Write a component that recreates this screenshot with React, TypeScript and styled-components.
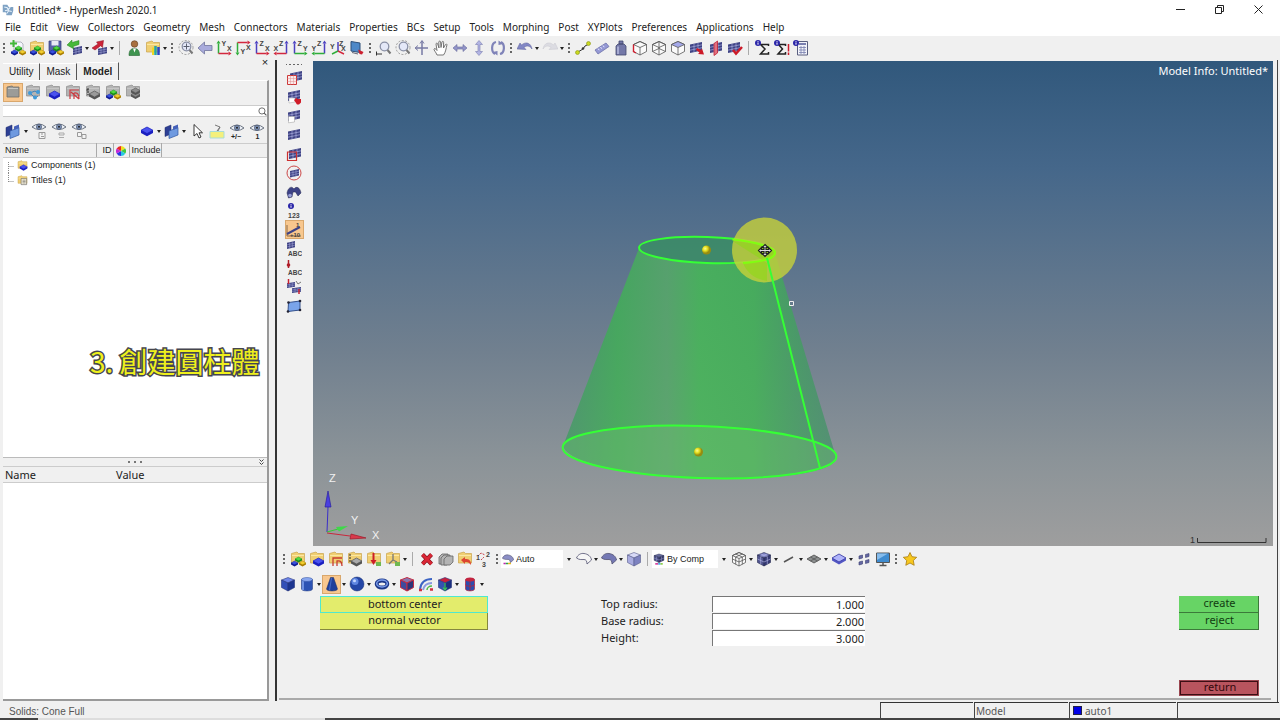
import React from 'react';
import styled, { createGlobalStyle, css } from 'styled-components';

const GlobalStyle = createGlobalStyle`
  * { box-sizing: border-box; }
  body { margin: 0; background: #f0f0f0; }
  button, input, select { font: inherit; color: inherit; margin: 0; padding: 0; border: 0; border-radius: 0; background: none; }
`;

const ui = `"Noto Sans", "Noto Sans CJK TC", sans-serif`;
const classic = `"Liberation Sans", Arial, sans-serif`;

/* ---------- window frame ---------- */

const Window = styled.div`
  position: relative;
  display: flex;
  flex-direction: column;
  min-height: 100vh;
  background: #f0f0f0;
  color: #222;
  font: 11px/16px ${ui};
`;

const TitleBar = styled.header`
  display: flex;
  align-items: center;
  height: 19px;
  padding-left: 2px;
  gap: 4px;
  background: #fff;
`;

const WindowTitle = styled.h1`
  flex: 1;
  margin: 0;
  font: 10px/18px ${ui};
`;

const WindowButton = styled.button`
  display: grid;
  place-items: center;
  width: 39px;
  height: 18px;
`;

const WindowButtons = styled.div`
  display: flex;
  padding-right: 2px;
`;

const MenuBar = styled.nav`
  display: flex;
  align-items: flex-start;
  gap: 9px;
  height: 17px;
  padding-left: 5px;
  background: #fff;
`;

const MenuItem = styled.button`
  font: 10px/16px ${ui};
  white-space: nowrap;
`;

const Body = styled.div`
  display: flex;
  flex: 1;
`;

/* ---------- tool bars ---------- */

const ToolBar = styled.div<{ $height: number; $indent?: number }>`
  display: flex;
  align-items: center;
  height: ${p => p.$height}px;
  padding-left: ${p => p.$indent ?? 0}px;
`;

const ToolButton = styled.button<{ $active?: boolean; $wide?: boolean }>`
  display: grid;
  place-items: center;
  flex: none;
  width: ${p => (p.$wide ? 20 : 19)}px;
  height: 19px;
  ${p => p.$active && css`background: #f8c78e; box-shadow: inset 0 0 0 1px #d9a76c;`}
`;

const Drop = styled.button`
  flex: none;
  width: 6px;
  height: 16px;
  display: grid;
  place-items: center;
  &::after {
    content: '';
    border: 2px solid transparent;
    border-top: 3px solid #222;
    border-bottom: 0;
  }
`;

const Grip = styled.span`
  flex: none;
  width: 8px;
  height: 14px;
  background: radial-gradient(circle, #666 1px, transparent 1px) center / 8px 4px repeat-y;
`;

const Rule = styled.span`
  flex: none;
  width: 1px;
  height: 14px;
  margin: 0 4px;
  background: #aaa;
`;

const Spacer = styled.span`
  flex: 1;
`;

/* ---------- model browser ---------- */

const Dock = styled.aside`
  display: flex;
  flex-direction: column;
  width: 277px;
  flex: none;
  padding: 0 6px 0 3px;
  border-right: 2px solid #333;
  margin-bottom: 1px;
`;

const TabRow = styled.div`
  display: flex;
  align-items: flex-end;
  height: 20px;
`;

const Tab = styled.button<{ $active?: boolean }>`
  height: ${p => (p.$active ? 18 : 17)}px;
  padding: 0 6px;
  border-right: 1px solid #555;
  border-top: 1px solid #fff;
  font: ${p => (p.$active ? 'bold' : 'normal')} 10px/16px ${classic};
`;

const CloseTab = styled.button`
  align-self: flex-start;
  margin-left: auto;
  width: 8px;
  height: 5px;
  font: 11px/3px ${classic};
`;

const Browser = styled.div`
  display: flex;
  flex-direction: column;
  flex: 1;
  border-top: 1px solid #fff;
  border-right: 2px solid #999;
  border-bottom: 2px solid #999;
`;

const SearchBox = styled.label`
  display: flex;
  align-items: center;
  height: 12px;
  margin: 2px 0;
  background: #fff;
  border-top: 1px solid #ccc;
  border-bottom: 1px solid #ccc;
  input { flex: 1; min-width: 0; height: 10px; outline: 0; }
`;

const TreePane = styled.div`
  height: 314px;
  background: #fff;
`;

const PropertyPane = styled.div`
  flex: 1;
  background: #fff;
`;

const DataTable = styled.table<{ $font: string; $size: number; $head: number }>`
  width: 100%;
  table-layout: fixed;
  border-collapse: collapse;
  font: ${p => p.$size}px/13px ${p => p.$font};
  th {
    height: ${p => p.$head}px;
    padding: 0 0 0 2px;
    background: #f0f0f0;
    border-bottom: 1px solid #ccc;
    border-top: 1px solid #ccc;
    text-align: left;
    font-weight: normal;
    white-space: nowrap;
  }
  td { padding: 0; height: 15px; }
`;

const Column = styled.th<{ $line?: boolean; $end?: boolean }>`
  ${p => p.$line && css`border-right: 1px solid #aaa;`}
  && { ${p => p.$end && css`text-align: right; padding-right: 1px;`} }
`;

const TreeCell = styled.div`
  display: flex;
  align-items: center;
  gap: 3px;
  height: 15px;
  white-space: nowrap;
  padding-left: 5px;
  svg { flex: none; }
`;

const Splitter = styled.div`
  display: flex;
  align-items: center;
  justify-content: center;
  height: 9px;
  border-top: 1px solid #bbb;
  background: radial-gradient(circle, #777 1px, transparent 1px) center / 6px 6px no-repeat,
    radial-gradient(circle, #777 1px, transparent 1px) calc(50% - 6px) center / 6px 6px no-repeat,
    radial-gradient(circle, #777 1px, transparent 1px) calc(50% + 6px) center / 6px 6px no-repeat;
  svg { margin-left: auto; margin-right: 3px; }
`;

/* ---------- work area ---------- */

const Work = styled.main`
  display: flex;
  flex-direction: column;
  flex: 1;
  min-width: 0;
  padding: 1px 2px 0 1px;
  margin-right: 2px;
  border-right: 1px solid #444;
`;

const Stage = styled.div`
  display: flex;
  padding: 0 2px 0 6px;
`;

const SideBar = styled.div`
  display: flex;
  flex-direction: column;
  width: 29px;
  flex: none;
  align-items: center;
  padding-right: 9px;
`;

const SideGrip = styled.span`
  width: 16px;
  height: 7px;
  background: radial-gradient(circle, #666 1px, transparent 1px) center / 4px 7px repeat-x;
`;

const Viewport = styled.section`
  position: relative;
  flex: 1;
  min-width: 0;
  background: linear-gradient(#31587c, #45678a 22%, #71808f 60%, #8b9398 82%, #9e9e9e);
`;

const Scene = styled.svg`
  display: block;
  width: 100%;
`;

const ModelInfo = styled.p`
  position: absolute;
  top: 1px;
  right: 5px;
  margin: 0;
  color: #fff;
  font: 11px/18px ${ui};
`;

const Picker = styled.label<{ $width: number }>`
  display: flex;
  align-items: center;
  flex: none;
  height: 18px;
  width: ${p => p.$width}px;
  padding-left: 1px;
  gap: 2px;
  background: #fff;
  select {
    flex: 1;
    min-width: 0;
    appearance: none;
    outline: 0;
    font: 9px/16px ${classic};
  }
`;

const PickerDrop = styled(Drop)`
  width: 11px;
`;

const Panel = styled.form`
  display: flex;
  flex: 1;
  margin: 0 4px 2px 1px;
  padding: 0 12px 2px 41px;
  border-bottom: 2px solid #aaa;
  font: 11px/15px ${ui};
`;

const PanelColumn = styled.div<{ $width: number; $after?: number }>`
  display: flex;
  flex-direction: column;
  width: ${p => p.$width}px;
  margin-right: ${p => p.$after ?? 0}px;
`;

const tones = {
  pick: ['#e3ec6c', '#85883f'],
  go: ['#67d465', '#3c7a3a'],
  back: ['#b9545e', '#6b2c33'],
};

const PanelButton = styled.button<{ $tone: keyof typeof tones; $focus?: boolean }>`
  width: 100%;
  height: 17px;
  padding: 0 0 2px 2px;
  line-height: 14px;
  text-align: center;
  background: ${p => tones[p.$tone][0]};
  border-right: 1px solid ${p => tones[p.$tone][1]};
  border-bottom: 1px solid ${p => tones[p.$tone][1]};
  ${p => p.$focus && css`border: 1px solid #4fe8d0;`}
  ${p => p.$tone === 'back' && css`
    height: 16px;
    margin-top: auto;
    line-height: 10px;
    border: 2px solid #3c0e14;
    outline: 1px solid #9a4650;
    outline-offset: -1px;
    color: #33080c;
  `}
  ${p => p.$tone === 'go' && css`color: #123c12;`}
`;

const Field = styled.label`
  display: flex;
  height: 17px;
  span { width: 111px; }
  input {
    width: 153px;
    height: 16px;
    margin-bottom: 1px;
    padding: 0 1px 1px 0;
    text-align: right;
    background: #fff;
    border-top: 1px solid #777;
    border-left: 1px solid #777;
    outline: 0;
  }
`;

const StatusBar = styled.footer`
  display: flex;
  align-items: stretch;
  height: 18px;
  border-bottom: 2px solid;
  border-image: linear-gradient(90deg, #444 40px, #ddd 40px, #ddd 326px, #444 326px) 2;
  font: 10px/20px ${classic};
  color: #555;
`;

const StatusText = styled.p`
  flex: 1;
  margin: 0;
  padding-left: 9px;
`;

const StatusCell = styled.div<{ $width: number }>`
  display: flex;
  align-items: center;
  gap: 3px;
  width: ${p => p.$width}px;
  border-left: 1px solid #444;
  border-top: 1px solid #333;
  margin-right: 1px;
  padding-left: 1px;
  font: 10px/16px ${ui};
`;

const Swatch = styled.span`
  width: 9px;
  height: 9px;
  margin-left: 2px;
  background: #0000e6;
  border: 1px solid #224;
`;

const Caption = styled.p`
  position: absolute;
  left: 90px;
  top: 341px;
  margin: 0;
  color: #eef01c;
  font: 28px/40px "Noto Sans CJK TC", sans-serif;
  -webkit-text-stroke: 3px #45454f;
  paint-order: stroke fill;
  white-space: nowrap;
`;

/* ---------- icon parts ---------- */

const Svg = ({ children, size = 16 }: { children: React.ReactNode; size?: number }) => (
  <svg width={size} height={size} viewBox="0 0 16 16" fill="none" aria-hidden="true">{children}</svg>
);

const FolderShape = ({ gray }: { gray?: boolean }) => (
  <g>
    <path d="M1.500 2.500 7 1l1.500 1.500H14.500V12H1.500z" fill={gray ? '#b4b4b4' : '#f0cf72'} stroke={gray ? '#8c8c8c' : '#c9a24a'} strokeWidth=".7" />
    <path d="M2 4.500h12" stroke={gray ? '#cfcfcf' : '#fff0b8'} strokeWidth=".7" />
  </g>
);

const Slab = ({ x = 4, y = 7, c = '#1a1fc0', t = '#4a52ee', w = 11 }: { x?: number; y?: number; c?: string; t?: string; w?: number }) => (
  <g transform={`translate(${x} ${y}) scale(${w / 11})`}>
    <path d="M0 3v2.500l5.500 3 5.500-3V3z" fill={c} />
    <path d="M0 3 5.500 0 11 3 5.500 6z" fill={t} stroke={c} strokeWidth=".7" />
  </g>
);

const Trio = () => (
  <g>
    <Slab x={5} y={6} w={7} c="#188a18" t="#50dc40" />
    <Slab x={1} y={10} w={7} c="#101a90" t="#3850e0" />
    <Slab x={9} y={10} w={7} c="#a87c00" t="#f2cf30" />
  </g>
);

const Patch = ({ x = 2, y = 2, w = 12, h = 11, c = '#3f4384' }: { x?: number; y?: number; w?: number; h?: number; c?: string }) => (
  <g transform={`translate(${x} ${y}) scale(${w / 12} ${h / 11})`}>
    <path d="M0 2.500 12 0v8.500L0 11z" fill={c} />
    <path d="M0 5.300 12 2.800M0 8.200 12 5.700M4 1.700v8.500M8 .8v8.500" stroke="#a9ade0" strokeWidth=".7" />
  </g>
);

const CubeShape = ({ t = '#6f86e8', l = '#3350b8', r = '#1c3590', s = '#26367c', sw = 0.6 }: { t?: string; l?: string; r?: string; s?: string; sw?: number }) => (
  <g stroke={s} strokeWidth={sw} strokeLinejoin="round">
    <path d="M1.500 4 8 1.500 14.500 4 8 7z" fill={t} />
    <path d="M1.500 4 8 7v8L1.500 11.500z" fill={l} />
    <path d="M14.500 4 8 7v8l6.500-3.500z" fill={r} />
  </g>
);

const WireCube = ({ inner, top, grid }: { inner?: boolean; top?: boolean; grid?: boolean }) => (
  <g stroke="#555" strokeWidth=".8" strokeLinejoin="round">
    <path d="M1.500 4.500 8 1.500l6.500 3V11.500L8 15l-6.500-3.500z" fill="#fafafa" />
    <path d="M1.500 4.500 8 7.500l6.500-3L8 1.500z" fill={top ? '#a5a9ea' : 'none'} />
    <path d="M8 7.500V15" />
    {inner && <path d="M8 1.500v7M1.500 11.500 8 8.500l6.500 3" />}
    {grid && <path d="M4.700 6v7.300M11.300 6v7.300M1.500 8 8 11l6.500-3M4.700 3l6.600 3M11.300 3 4.700 6" />}
  </g>
);

const Letter = ({ x, y, children, c = '#444', size = 7 }: { x: number; y: number; children: string; c?: string; size?: number }) => (
  <text x={x} y={y} fontSize={size} fontFamily="Liberation Sans, sans-serif" fontWeight="bold" fill={c}>{children}</text>
);

const R = '#d3283f', G = '#2fae3a', B = '#4a3fc0';

const AxisIcon = ({ v, h, right, down, a, b }: { v: string; h: string; right?: boolean; down?: boolean; a: string; b: string }) => {
  const x = right ? 13.5 : 2.5;
  const y = down ? 2.5 : 13.5;
  const tip = down ? 15.5 : 0.5;
  const tipY = down ? 12.5 : 3.5;
  const end = right ? 0.5 : 15.5;
  const endX = right ? 3.5 : 12.5;
  return (
    <Svg>
      <path d={`M${x} ${y}V${tipY}`} stroke={v} strokeWidth="1.500" />
      <path d={`M${x - 2} ${tipY}L${x} ${tip}L${x + 2} ${tipY}z`} fill={v} />
      <path d={`M${x} ${y}H${endX}`} stroke={h} strokeWidth="1.500" />
      <path d={`M${endX} ${y - 2}L${end} ${y}L${endX} ${y + 2}z`} fill={h} />
      <Letter x={right ? 6 : 5.5} y={down ? 14 : 6}>{a}</Letter>
      <Letter x={right ? 0.5 : 11} y={down ? 9.5 : 10.5}>{b}</Letter>
    </Svg>
  );
};

const EyeShape = ({ y = 0 }: { y?: number }) => (
  <g transform={`translate(0 ${y})`}>
    <path d="M1 5Q8-1 15 5 8 10 1 5z" fill="#eef2f8" stroke="#6a7280" />
    <circle cx="8" cy="4.800" r="2.600" fill="#7f93b8" stroke="#46546e" strokeWidth=".7" />
    <circle cx="8" cy="4.800" r="1" fill="#222" />
  </g>
);

const Info = ({ x = 3, y = 3 }: { x?: number; y?: number }) => (
  <g>
    <circle cx={x} cy={y} r="3" fill="#2a25a8" />
    <path d={`M${x} ${y - 0.5}v2.200M${x} ${y - 1.9}v.8`} stroke="#fff" />
  </g>
);

const Glass = ({ dashed }: { dashed?: boolean }) => (
  <g>
    <circle cx="8.500" cy="6.500" r="4.300" fill="#e4e8f8" stroke="#8a90a6" strokeWidth="1.300" />
    <path d="m11.500 10 3 3.500" stroke="#777" strokeWidth="2" />
    {dashed && <circle cx="8" cy="7.500" r="7" stroke="#888" strokeWidth=".8" strokeDasharray="2 1.500" />}
  </g>
);

const Surface = ({ c = '#8c8fc6' }: { c?: string }) => (
  <path d="M.5 7C2 3.500 5 2 8 2.500c4 .5 7 3 7.500 6.500L11 13c0-3-1-4.500-3-4.500-3 0-4.500.5-7.500-1.500z" fill={c} stroke="#505070" strokeWidth=".8" />
);

const icons: Record<string, React.ReactNode> = {
  new: <Svg><path d="M4 2h7l2 2v7H4z" fill="#f4f7fb" stroke="#99a" strokeWidth=".7" /><path d="M3.500 0v7M0 3.500h7" stroke="#43b83a" strokeWidth="2" /><Trio /></Svg>,
  open: <Svg><FolderShape /><Trio /></Svg>,
  save: <Svg><path d="M1 1h12v11H2l-1-1z" fill="#5762a8" stroke="#343c78" strokeWidth=".7" /><path d="M3.500 1h7v4.500h-7z" fill="#e8ebf5" /><Trio /></Svg>,
  import: <Svg><Patch x={6} y={6} w={9} h={9} /><path d="m0 5 5-5v2.500l7-2v4L6 6.500l1 2.500z" fill="#47b83a" stroke="#26801c" strokeWidth=".5" /></Svg>,
  export: <Svg><Patch x={6} y={7} w={9} h={8} /><path d="m0 8 6-4-1.500-2 7-1.500-1 7-1.800-1.800L3 10z" fill="#cc2438" stroke="#8a0f20" strokeWidth=".5" /></Svg>,
  user: <Svg><circle cx="8.500" cy="4" r="3.300" fill="#a87040" stroke="#5f3a1c" strokeWidth=".6" /><path d="M3 15.500c0-5 2-7 5-7s5.500 1 5.500 7z" fill="#3f9450" stroke="#24642f" strokeWidth=".6" /><path d="m7 8.500 1.500 4L10 8.500" fill="#fff" /></Svg>,
  folderBars: <Svg><FolderShape /><path d="M8 7.500V15" stroke="#f0d820" strokeWidth="2" /><path d="M10.500 6v9" stroke="#26a6a0" strokeWidth="2.500" /><path d="M13.500 7v8" stroke="#2846c8" strokeWidth="2.500" /></Svg>,
  fit: <Svg><Glass dashed /><path d="M8.500 3.500v6M5.500 6.500h6" stroke="#5a6070" /></Svg>,
  back: <Svg><path d="m1 8 6.500-6v3.500H15v5H7.500V14z" fill="#a9abdc" stroke="#70739c" strokeWidth=".8" /></Svg>,
  ax1: <AxisIcon v={G} h={R} a="Y" b="X" />,
  ax2: <AxisIcon v={G} h={R} down a="Y" b="X" />,
  ax3: <AxisIcon v={B} h={R} a="Z" b="X" />,
  ax4: <AxisIcon v={B} h={R} right a="Z" b="X" />,
  ax5: <AxisIcon v={B} h={G} a="Z" b="Y" />,
  ax6: <AxisIcon v={B} h={G} right a="Z" b="Y" />,
  ax7: <Svg><path d="M8 11V2" stroke={B} strokeWidth="1.500" /><path d="m8 11-6 3" stroke={G} strokeWidth="1.500" /><path d="m8 11 6 3" stroke={R} strokeWidth="1.500" /><Letter x={0} y={9}>Y</Letter><Letter x={9} y={6}>Z</Letter><Letter x={11} y={11}>X</Letter></Svg>,
  screenPin: <Svg><path d="M2 1.500 11 3v9.500L2 11z" fill="#4d88c8" stroke="#2d4f78" /><path d="M3 12.500 9 14" stroke="#667" /><path d="M9 9.500 14.500 12 13 14.500l-2.500-.5z" fill="#cc2030" /></Svg>,
  zoomArrow: <Svg><Glass /><path d="M0 14h6M.5 11.500v4" stroke="#333" /></Svg>,
  zoomArea: <Svg><Glass dashed /></Svg>,
  cross: <Svg><path d="M8 1v14M2 8h12" stroke="#777aa4" strokeWidth="1.500" /><path d="m6 3.500 2-3 2 3M4 5.500 1 8l3 2.500" stroke="#777aa4" /></Svg>,
  hand: <Svg><path d="M4 15c-1-3-3.500-5-3-6s1.500-.5 3 1.500L3 4c0-1 1.300-1.300 1.700 0L6 8 5.800 2c0-1.200 1.700-1.200 1.800 0L8 7.500 9 2c.3-1 1.700-.8 1.600.3L10.500 8l2-3.500c.5-1 1.700-.4 1.400.6-.9 3-1 7-3.400 9.900z" fill="#fff" stroke="#666" strokeWidth=".9" /></Svg>,
  horiz: <Svg><path d="m1 8 4-3.500v2.500h6V4.500L15 8l-4 3.500V9H5v2.500z" fill="#9294c8" stroke="#66699a" strokeWidth=".6" /></Svg>,
  vert: <Svg><path d="m8 .5 3.500 4H9v7h2.500l-3.500 4-3.500-4H7v-7H4.500z" fill="#b2b4e4" stroke="#7a7db0" strokeWidth=".6" /></Svg>,
  rotate: <Svg><path d="M6 2C1 3 1 12 5 14M10 14c5-1 5-10 1-12" stroke="#7f83b8" strokeWidth="2.200" /><path d="m2.500 12 5 3.500V11zM13.500 4l-5-3.500V5z" fill="#7f83b8" /></Svg>,
  undo: <Svg><path d="m0 9 3-6 1.500 2C9 1 14 3 15 9c-2-3-5-4-8-1.500l2 2z" fill="#8287c4" stroke="#585d98" strokeWidth=".5" /></Svg>,
  redo: <Svg><path d="m16 9-3-6-1.500 2C7 1 2 3 1 9c2-3 5-4 8-1.500l-2 2z" fill="#dcdce2" stroke="#c6c6ce" strokeWidth=".5" /></Svg>,
  link: <Svg><path d="M3 12 8 9l2-3 4-2" stroke="#333" /><circle cx="2.500" cy="12.500" r="2" fill="#c8d820" stroke="#8a9610" strokeWidth=".6" /><circle cx="13.500" cy="3.500" r="2" fill="#c8d820" stroke="#8a9610" strokeWidth=".6" /><circle cx="8" cy="8.500" r="1.300" fill="#333" /></Svg>,
  ruler: <Svg><path d="m1 10 11-7 3 3.500L4 14z" fill="#9498d4" stroke="#6e72aa" strokeWidth=".8" /><path d="m4 8.500 1.200 1.700M6.500 7l1.200 1.700M9 5.500l1.200 1.700" stroke="#e8e8ff" /></Svg>,
  mass: <Svg><path d="M6 1h4v3H6zM3 6l2-2h6l2 2v9H3z" fill="#7478a8" stroke="#454970" strokeWidth=".8" /><path d="M5 6.500V14" stroke="#b8bce0" strokeWidth="1.500" /></Svg>,
  cubeRed: <Svg><WireCube /><path d="M1.500 4.500v7L4 13" stroke="#cf2030" strokeWidth="1.400" /></Svg>,
  cubeWire: <Svg><WireCube inner /></Svg>,
  cubeTop: <Svg><WireCube top /></Svg>,
  meshArrow: <Svg><Patch x={1} /><path d="m8 8 4 2 1-1.500 2 6-6-.5 1.500-1.500L7 10z" fill="#cc1a28" /></Svg>,
  meshMirror: <Svg><Patch /><path d="M6 3.500 9.500 1v12L6 15.500z" fill="#e07080" stroke="#c22236" strokeWidth=".8" /></Svg>,
  meshCheck: <Svg><Patch x={1} /><path d="m6 10 3 3.500L15 7" stroke="#cc1a28" strokeWidth="2.500" /></Svg>,
  sigma: <Svg><path d="M13.500 6V4.500H5.500L10 9l-4.500 5h8v-2" stroke="#222" strokeWidth="1.500" /><Info /></Svg>,
  sigmaBang: <Svg><path d="M11.500 6V4.500h-7L8.500 9l-4.500 5h7.500v-2" stroke="#222" strokeWidth="1.500" /><path d="M14.500 4v7.500M14.500 12.500V15" stroke="#cc1a28" strokeWidth="1.500" /><Info /></Svg>,
  calc: <Svg><path d="M4.500 1.500h10v13.500h-10z" fill="#f2f3fa" stroke="#5a5f80" /><path d="M6 3h7v2H6z" fill="#7a80b0" /><path d="M6 7.500h7M6 10h7M6 12.500h7M8 6v8M11 6v8" stroke="#7a80b0" strokeWidth=".8" /><Info /></Svg>,

  bModel: <Svg><path d="M2 3 7 2l1.500 1H14v10H2z" fill="#9c9c98" stroke="#6e6e6a" strokeWidth=".8" /><path d="M3 4.500h10" stroke="#c8c8c4" /></Svg>,
  bTree: <Svg><FolderShape gray /><path d="m5 9 5-2 3 2M5 9l5 5 3-2" stroke="#3c80b8" /><g fill="#3f9ad8"><circle cx="5" cy="9" r="2" /><circle cx="13" cy="8" r="2" /><circle cx="10" cy="13.500" r="2" /></g></Svg>,
  bComp: <Svg><FolderShape gray /><Slab /></Svg>,
  bProp: <Svg><FolderShape gray /><path d="M5 15V6h9M9 15V9M9 9c4-1 5 2 5 6M6 8l8 7" stroke="#cc3a40" strokeWidth="1.200" /></Svg>,
  bMat: <Svg><FolderShape gray /><Slab c="#555" t="#9a9a9a" /><path d="M3 4v7M1.500 6h3" stroke="#222" strokeDasharray="2 1" /></Svg>,
  bInc: <Svg><FolderShape gray /><Trio /></Svg>,
  bStack: <Svg><FolderShape gray /><Slab x={6} y={8} w={9} c="#555" t="#8c8c8c" /><Slab x={6} y={4} w={9} c="#555" t="#8c8c8c" /></Svg>,
  planes: <Svg><path d="M1 4.500 7 2v9l-6 2.500z" fill="#2d3f94" stroke="#1f2b6a" strokeWidth=".5" /><path d="m5 8 9-3.500V12l-9 3.500z" fill="#6f9ae0" stroke="#2f56a0" strokeWidth=".7" /><path d="M9 3.500 14 1.500V5L9 7z" fill="#4560b8" /></Svg>,
  eyeTree1: <Svg><EyeShape y={-1} /><path d="M8 9.500h6v6H8zM10 11h2M10 13.500h3" stroke="#999" fill="#f4f4f4" /></Svg>,
  eyeTree2: <Svg><EyeShape y={-1} /><path d="M8 10h5v2H8zM8 14.500h5" stroke="#aaa" /></Svg>,
  eyeTree3: <Svg><EyeShape y={-1} /><path d="M6.500 9.500h4v4h-4zM11 11.500h4v4h-4z" stroke="#999" fill="#f4f4f4" /></Svg>,
  slab: <Svg><Slab x={2} y={4} w={12} /></Svg>,
  cursor: <Svg><path d="M5 1.500v11.500l3-2.500 2 4.500 2-1-2-4.200h3.500z" fill="#fff" stroke="#222" strokeWidth=".9" /></Svg>,
  isolate: <Svg><path d="M1 8.500h14V15H1z" fill="#f4f07c" stroke="#a8dcd8" /><path d="m6 2 5 2-2 4M11 4 8 8" stroke="#777" /></Svg>,
  eyePm: <Svg><EyeShape /><Letter x={2} y={15.5} c="#222">+/−</Letter></Svg>,
  eyeOne: <Svg><EyeShape /><Letter x={6.5} y={15.5} c="#222">1</Letter></Svg>,

  sMask: <Svg><Patch x={4} y={1} /><path d="M1.500 5.500h9v9h-9z" fill="#fbeaea" stroke="#cc3838" /><path d="M4.500 5.500v9M7.500 5.500v9M1.500 8.500h9M1.500 11.500h9" stroke="#e09090" strokeWidth=".5" /></Svg>,
  sRev: <Svg><Patch y={1} /><path d="M3 9h6v4l-6 1z" fill="#fff" stroke="#aaa" strokeWidth=".5" /><path d="m8 11 3-2.500v1.500h4v3.500l-2 2H11z" fill="#d01c28" /></Svg>,
  sUnmask: <Svg><Patch /><path d="M2.500 8.500h6V14l-6 .8z" fill="#fff" stroke="#aaa" strokeWidth=".6" /></Svg>,
  sAll: <Svg><Patch /></Svg>,
  sBox: <Svg><Patch x={3} y={2} /><path d="M1.500 6h9v8.500h-9z" stroke="#cc3030" strokeWidth="1.200" /></Svg>,
  sCircle: <Svg><circle cx="8" cy="8" r="7" stroke="#cc4848" /><Patch x={4} y={4} w={9} h={8.5} /></Svg>,
  sFind: <Svg><path d="M1 9c1-5 4-7 6-5l1 1c2-3 6-2 7 4l-3 3-2.500-4L7 8l-1 5-3.500 1z" fill="#3d4286" stroke="#22264e" strokeWidth=".5" /><circle cx="4" cy="11.500" r="1.800" fill="#9aa0d8" /></Svg>,
  sNum: <Svg><Info x={5} y={3} /><Letter x={2} y={15}>123</Letter></Svg>,
  sMeasure: <Svg><path d="M1 3v11h14" stroke="#8a6a48" /><path d="m1 12 13-7" stroke="#3d4286" strokeWidth="2" /><Letter x={10} y={5} size={6}>1</Letter><Letter x={4} y={15} size={6}>+10</Letter></Svg>,
  sAbc: <Svg><Patch x={1} y={0} w={8} h={8} /><Letter x={2} y={15} size={6.5}>ABC</Letter></Svg>,
  sAbcRed: <Svg><path d="M2.500 0v8" stroke="#b01c28" strokeWidth="1.500" /><circle cx="2.500" cy="5" r="1.800" fill="#b01c28" /><Letter x={2} y={15} size={6.5}>ABC</Letter></Svg>,
  sMove: <Svg><Patch x={1} y={3} w={8} h={6} /><Patch x={6} y={8} w={9} h={6} /><path d="M2.500 0v5M13 10v5" stroke="#c82030" strokeWidth="1.500" /><path d="m10 2 2 3 3-2" stroke="#777" /></Svg>,
  sQuad: <Svg><path d="M2.500 4.500 14 3v9L2 13.500z" fill="#7aa4ea" stroke="#33508c" /><g fill="#223"><circle cx="2.500" cy="4.500" r="1.300" /><circle cx="14" cy="3" r="1.300" /><circle cx="14" cy="12" r="1.300" /><circle cx="2" cy="13.500" r="1.300" /></g></Svg>,

  fComp: <Svg><FolderShape /><Slab /></Svg>,
  fTitle: <Svg><FolderShape /><path d="M6 5h8v9H6z" fill="#f6f0dc" stroke="#555" strokeWidth=".8" /><path d="M8 7.500h4.500M8 9.500h4.500M8 11.500h4.500" stroke="#555" strokeWidth=".8" /></Svg>,
  fProp: <Svg><FolderShape /><path d="M5 15V7h9M9 15v-5c4-1 5 2 5 5" stroke="#c83c30" strokeWidth="1.300" /></Svg>,
  fMat: <Svg><FolderShape /><Slab c="#555" t="#aaa" /><path d="M3 3v9" stroke="#222" strokeDasharray="2 1" /></Svg>,
  fLoad: <Svg><FolderShape /><path d="M7.500 2v9" stroke="#cc1c28" strokeWidth="2" /><path d="m4.500 9 3 5 3-5z" fill="#cc1c28" /><path d="M10 11h5v4h-5z" fill="#70b850" /></Svg>,
  fSys: <Svg><FolderShape /><path d="M8 3v6l-4 4M8 9l4 2" stroke="#777" strokeWidth="1.300" /><path d="M10 11h5v4h-5z" fill="#70b850" /></Svg>,
  del: <Svg><path d="m3.500 3.500 9 9.500M12.500 3.500 3.500 13" stroke="#7f1018" strokeWidth="4" /><path d="m3.500 3.500 9 9.500M12.500 3.500 3.500 13" stroke="#da2635" strokeWidth="3" /></Svg>,
  stack: <Svg><g stroke="#666" strokeWidth=".8" fill="#b4b4b4"><path d="M1 6 4 3h6v6l-3 4H1z" /><path d="m3 7 3-3h6v6l-3 4H3z" /><path d="m6 8 3-3h6v6l-3 3H6z" /></g></Svg>,
  fRed: <Svg><FolderShape /><path d="m4 9 4-3v2c4 0 6 1 6 6-2-2.500-3-3-6-3v2z" fill="#dc4430" /></Svg>,
  renum: <Svg><path d="m2 5 3-3 4 2M5 9l3-3" stroke="#c84048" strokeDasharray="2 1" /><Letter x={0} y={9}>1</Letter><Letter x={10} y={6}>2</Letter><Letter x={6} y={15.5}>3</Letter></Svg>,
  autoSurf: <Svg><Surface /><path d="M2 14h3" stroke="#c020b0" strokeWidth="2" /><path d="M5 14h3" stroke="#28a848" strokeWidth="2" /><path d="M8 14h4" stroke="#e8b820" strokeWidth="2" /></Svg>,
  surfWire: <Svg><Surface c="#f6f6f6" /></Svg>,
  surf: <Svg><Surface c="#7478b4" /></Svg>,
  cubePale: <Svg><CubeShape t="#d8daf6" l="#a9ace0" r="#7d82c0" s="#555a8a" /></Svg>,
  compCube: <Svg><g transform="scale(1 .85)"><CubeShape t="#666b9c" l="#4b5086" r="#34386a" s="#23264c" /><path d="M4.700 5.500v7.700M11.300 5.500v7.700M1.500 8 8 11l6.500-3" stroke="#a9ade0" strokeWidth=".6" /></g><path d="M3 14.500h4" stroke="#d02890" strokeWidth="2" /><path d="M7 14.500h3" stroke="#28a8e8" strokeWidth="2" /><path d="M10 14.500h3" stroke="#80c830" strokeWidth="2" /></Svg>,
  wireGrid: <Svg><WireCube grid /></Svg>,
  solidGrid: <Svg><CubeShape t="#7d81c0" l="#51558f" r="#363a74" s="#22264e" /><path d="M4.700 5.500v7.700M11.300 5.500v7.700M1.500 8 8 11l6.500-3M4.700 2.800l6.600 2.700M11.300 2.800 4.700 5.500" stroke="#b9bcec" strokeWidth=".6" /></Svg>,
  line: <Svg><path d="m3 11 9-5" stroke="#555" strokeWidth="1.500" /></Svg>,
  plate: <Svg><path d="m1 8 7-4 7 4-7 4z" fill="#8c8f90" stroke="#4a4a4a" strokeWidth=".8" /><path d="m4.500 6 7 4M11.500 6l-7 4" stroke="#444" strokeWidth=".6" /></Svg>,
  plateBlue: <Svg><path d="M1 7v2.500l7 4 7-4V7z" fill="#5256c4" /><path d="m1 7 7-4 7 4-7 4z" fill="#b0b4fa" stroke="#3e42a8" strokeWidth=".9" /></Svg>,
  tiles: <Svg><path d="m3 5 3.500-1v3L3 8zM9.500 3.500 13 2.500v3l-3.500 1zM3 11l3.500-1v3L3 14zM9.500 9.500l3.500-1v3l-3.500 1z" fill="#6468a4" stroke="#3a3e70" strokeWidth=".6" /></Svg>,
  monitor: <Svg><path d="M1.500 2h13v9.500h-13z" fill="#3f8cd0" stroke="#555" /><path d="m2 2.500 11 0L2 9z" fill="#86bcec" /><path d="M8 12v2M4.500 14.500h7" stroke="#555" strokeWidth="1.500" /></Svg>,
  star: <Svg><path d="m8 1.500 2 4.200 4.700.6-3.400 3.200.9 4.800L8 12l-4.200 2.300.9-4.800-3.400-3.200 4.700-.6z" fill="#f7c71e" stroke="#a87c10" strokeWidth=".8" /></Svg>,

  gCube: <Svg><CubeShape /></Svg>,
  gCyl: <Svg><path d="M2.500 3.500v9.500c0 2.600 11 2.600 11 0V3.500z" fill="#2c53b4" stroke="#1b357e" strokeWidth=".5" /><path d="M4 4v10" stroke="#6f92e2" strokeWidth="2" /><ellipse cx="8" cy="3.500" rx="5.500" ry="2" fill="#88a6ee" stroke="#2c4c9e" strokeWidth=".5" /></Svg>,
  gCone: <Svg><path d="M6.500 1.500 2.500 13c0 2.600 11 2.600 11 0l-4-11.500z" fill="#1f3f9c" stroke="#16295e" strokeWidth=".5" /><path d="m7.500 2-2 12" stroke="#4268c4" strokeWidth="1.200" /></Svg>,
  gSphere: <Svg><circle cx="8" cy="8" r="7" fill="#2446a6" stroke="#152c70" strokeWidth=".5" /><circle cx="6" cy="5.500" r="3.500" fill="#5f86e0" /><circle cx="5.500" cy="4.800" r="1.500" fill="#c4d6ff" /></Svg>,
  gTorus: <Svg><ellipse cx="8" cy="8" rx="5.300" ry="3.500" stroke="#1c3788" strokeWidth="4" /><ellipse cx="8" cy="7.500" rx="5.300" ry="3.500" stroke="#7b9cea" strokeWidth="1.500" /></Svg>,
  gCubeRed: <Svg><CubeShape t="#8878b0" l="#3f4a9c" r="#2c3478" s="#c22c44" sw={1} /></Svg>,
  gSweep: <Svg><path d="M2 13C3 6 7 3 14 3" stroke="#3c64c4" strokeWidth="2" /><path d="M5 14c1-5 4-7 9-7" stroke="#8a9ae0" strokeWidth="2" /><path d="M9 14c0-2 2-4 5-4" stroke="#50b848" strokeWidth="1.500" /><path d="M1 14h3M12 13.500h3" stroke="#d03040" strokeWidth="2.500" /></Svg>,
  gExtrude: <Svg><CubeShape t="#c8203c" l="#3552b0" r="#1b2f80" /><path d="M8 7v6M6 11.500 8 14l2-2.500" stroke="#38c858" strokeWidth="1.200" /></Svg>,
  gPipe: <Svg><path d="M3.500 3.500v9.500c0 2.500 9 2.500 9 0V3.500z" fill="#2c4cae" stroke="#b82238" strokeWidth=".7" /><ellipse cx="8" cy="3.500" rx="4.500" ry="2" fill="#c22440" /><path d="M3.500 8.500c0 2.300 9 2.300 9 0M8 5.500V15" stroke="#b82238" strokeWidth=".8" /></Svg>,
};

/* Entries: "name" draws a button, "|" a rule, ":" a grip, "v" a drop-down arrow, "*name" the active tool. */
const Tools = ({ items, wide }: { items: string; wide?: boolean }) => (
  <>
    {items.split(' ').map((it, i) => {
      if (it === ':') return <Grip key={i} />;
      if (it === '|') return <Rule key={i} />;
      if (it === 'v') return <Drop key={i} type="button" aria-label="More" />;
      const active = it.startsWith('*');
      const name = active ? it.slice(1) : it;
      return <ToolButton key={i} type="button" aria-label={name} $active={active} $wide={wide}>{icons[name]}</ToolButton>;
    })}
  </>
);

const menus = ['File', 'Edit', 'View', 'Collectors', 'Geometry', 'Mesh', 'Connectors', 'Materials', 'Properties', 'BCs', 'Setup', 'Tools', 'Morphing', 'Post', 'XYPlots', 'Preferences', 'Applications', 'Help'];

const sideTools = 'sMask sRev sUnmask sAll sBox sCircle sFind sNum *sMeasure sAbc sAbcRed sMove sQuad';

const fields: [string, string][] = [['Top radius:', '1.000'], ['Base radius:', '2.000'], ['Height:', '3.000']];

const ColorWheel = () => (
  <svg width="10" height="10" viewBox="0 0 12 12" display="block" aria-hidden="true">
    <path d="M6 6V0a6 6 0 0 1 5.200 3z" fill="#f0e020" />
    <path d="M6 6l5.200-3a6 6 0 0 1 0 6z" fill="#40c840" />
    <path d="M6 6l5.200 3A6 6 0 0 1 6 12z" fill="#28c8e0" />
    <path d="M6 6v6A6 6 0 0 1 .8 9z" fill="#2838e0" />
    <path d="M6 6 .8 9a6 6 0 0 1 0-6z" fill="#c028d8" />
    <path d="M6 6 .8 3A6 6 0 0 1 6 0z" fill="#e82828" />
  </svg>
);

const ModelScene = () => (
  <Scene viewBox="313 61 960 485" role="img" aria-label="Cone preview">
    <defs>
      <linearGradient id="side">
        <stop offset="0" stopColor="#3f9a62" stopOpacity=".75" />
        <stop offset=".2" stopColor="#3fb055" stopOpacity=".82" />
        <stop offset=".38" stopColor="#55a868" stopOpacity=".85" />
        <stop offset=".5" stopColor="#45b856" stopOpacity=".85" />
        <stop offset=".7" stopColor="#42b455" stopOpacity=".85" />
        <stop offset="1" stopColor="#3f8f66" stopOpacity=".7" />
      </linearGradient>
      <radialGradient id="ball" cx=".35" cy=".35">
        <stop offset="0" stopColor="#fffb90" />
        <stop offset=".5" stopColor="#e6e020" />
        <stop offset="1" stopColor="#968c10" />
      </radialGradient>
    </defs>
    <path d="M639 248 563 446C570 466 640 477 724 478.500 790 479 837 470 836 457L775 253C772 262 730 264 700 262.500 665 261 640 255 639 248z" fill="url(#side)" />
    <ellipse cx="707" cy="250" rx="68" ry="13" transform="rotate(2 707 250)" fill="#388e63" fillOpacity=".8" stroke="#35ff35" strokeWidth="2" />
    <ellipse cx="699.500" cy="452" rx="137" ry="26" transform="rotate(2 699.500 452)" fill="#70c070" fillOpacity=".35" stroke="#35ff35" strokeWidth="2" />
    <circle cx="706.500" cy="250" r="4.500" fill="url(#ball)" />
    <circle cx="698.500" cy="452" r="4.500" fill="url(#ball)" />
    <circle cx="764.500" cy="250" r="32.500" fill="#c9d338" fillOpacity=".78" />
    <path d="M732.500 241C755 243 775 247 775 253c0 6-15 9-32 10 4 10 12 16 24 18L767 263z" fill="#80e000" fillOpacity=".4" />
    <path d="M732.500 239.500C755 242 775 247 775 253c0 6-15 9-32 10" fill="none" stroke="#80ff10" strokeWidth="2" />
    <path d="m767 258 53 210" stroke="#35ff35" strokeWidth="2" />
    <g stroke="#222" fill="#ddd" strokeWidth="1.200">
      <path d="m765 244.500 3 3h-2v2h2.500v-2l3 3-3 3v-2H766v2h2l-3 3-3-3h2v-2h-2.500v2l-3-3 3-3v2h2.500v-2h-2z" />
    </g>
    <path d="M789.500 301.500h4v4h-4z" fill="none" stroke="#eee" />
    <g fontFamily="Liberation Sans, sans-serif" fontSize="11" fill="#f2f2f2">
      <text x="329" y="482">Z</text>
      <text x="351" y="524">Y</text>
      <text x="372" y="539">X</text>
      <text x="1190" y="543" fontSize="9" fill="#333">1</text>
    </g>
    <path d="m327 532 1-25" stroke="#3a2fc8" />
    <path d="m328 491 3 16h-6z" fill="#4a40e0" stroke="#2a20a0" strokeWidth=".7" />
    <path d="m327 532 11-3" stroke="#3c3" />
    <path d="m348 526-12 1 3 4.500z" fill="#3fd84a" />
    <path d="m327 533 23 3" stroke="#c8283c" />
    <path d="m366 538-15-4-1 5z" fill="#d83a4c" stroke="#a01828" strokeWidth=".7" />
    <path d="M1197.500 538v4.500h68.500V538" fill="none" stroke="#333" />
  </Scene>
);

export default function App() {
  return (
    <Window>
      <GlobalStyle />
      <TitleBar>
        <Svg size={12}>
          <path d="M1 1h6l2 3h6v5l-2 6H6l-1-4H1z" fill="#7fa2c4" />
          <path d="m3 4 4 1 2 4 4 1M4 9l4-1 3-4M6 13l3-4" stroke="#e4f0fa" strokeWidth="1.500" />
        </Svg>
        <WindowTitle>Untitled* - HyperMesh 2020.1</WindowTitle>
        <WindowButtons>
          <WindowButton type="button" aria-label="Minimize"><svg width="9" height="9" stroke="#222" fill="none"><path d="M0 4.500h9" /></svg></WindowButton>
          <WindowButton type="button" aria-label="Restore"><svg width="9" height="9" stroke="#222" fill="none"><path d="M.5 2.500h6v6h-6zM2.500 2.500v-2h6v6h-2" /></svg></WindowButton>
          <WindowButton type="button" aria-label="Close"><svg width="9" height="9" stroke="#222" fill="none"><path d="m.5.5 8 8M8.500.5l-8 8" /></svg></WindowButton>
        </WindowButtons>
      </TitleBar>
      <MenuBar>{menus.map(m => <MenuItem key={m} type="button">{m}</MenuItem>)}</MenuBar>
      <ToolBar $height={24}>
        <Tools items=": new open save import v export v | user folderBars v : fit back ax1 ax2 ax3 ax4 ax5 ax6 ax7 screenPin : zoomArrow zoomArea cross hand horiz vert rotate : undo v redo v : link ruler mass cubeRed cubeWire cubeTop meshArrow meshMirror meshCheck | sigma sigmaBang calc" />
      </ToolBar>

      <Body>
        <Dock>
          <TabRow>
            <Tab type="button">Utility</Tab>
            <Tab type="button">Mask</Tab>
            <Tab type="button" $active>Model</Tab>
            <CloseTab type="button" aria-label="Close browser">×</CloseTab>
          </TabRow>
          <Browser>
            <ToolBar $height={22}><Tools wide items="*bModel bTree bComp bProp bMat bInc bStack" /></ToolBar>
            <SearchBox>
              <input type="text" aria-label="Search" />
              <Svg size={9}><circle cx="7" cy="7" r="5.500" stroke="#555" strokeWidth="1.500" /><path d="m11 11 4 4" stroke="#555" strokeWidth="2" /></Svg>
            </SearchBox>
            <ToolBar $height={24}>
              <Tools wide items="planes v eyeTree1 eyeTree2 eyeTree3" />
              <Spacer />
              <Tools items="slab v planes v" />
              <Tools wide items="cursor isolate eyePm eyeOne" />
            </ToolBar>
            <TreePane>
              <DataTable $font={classic} $size={9} $head={14}>
                <colgroup><col width="93" /><col width="17" /><col width="16" /><col width="32" /><col /></colgroup>
                <thead>
                  <tr>
                    <Column $line>Name</Column>
                    <Column $line $end>ID</Column>
                    <Column $line><ColorWheel /></Column>
                    <Column $line>Include</Column>
                    <Column aria-label="More" />
                  </tr>
                </thead>
                <tbody>
                  {[['fComp', 'Components (1)'], ['fTitle', 'Titles (1)']].map(([icon, label]) => (
                    <tr key={label}>
                      <td>
                        <TreeCell>
                          <svg width="6" height="15" stroke="#888" strokeDasharray="1 1"><path d={icon === 'fComp' ? 'M.5 4v11M.5 8.500h6' : 'M.5 0v9M.5 8.500h6'} /></svg>
                          <svg width="11" height="11" viewBox="0 0 16 16">{icons[icon]}</svg>
                          {label}
                        </TreeCell>
                      </td>
                    </tr>
                  ))}
                </tbody>
              </DataTable>
            </TreePane>
            <Splitter>
              <svg width="5" height="7" stroke="#444" fill="none"><path d="m.5.5 2 2 2-2M.5 3.500l2 2 2-2" /></svg>
            </Splitter>
            <PropertyPane>
              <DataTable $font={ui} $size={11} $head={16}>
                <colgroup><col width="111" /><col /></colgroup>
                <thead><tr><Column>Name</Column><Column>Value</Column></tr></thead>
              </DataTable>
            </PropertyPane>
          </Browser>
        </Dock>

        <Work>
          <Stage>
            <SideBar>
              <SideGrip />
              <Tools items={sideTools} />
            </SideBar>
            <Viewport>
              <ModelScene />
              <ModelInfo>Model Info: Untitled*</ModelInfo>
            </Viewport>
          </Stage>
          <ToolBar $height={26} $indent={2}>
            <Tools items=": open fComp fProp fMat fLoad fSys v | del stack fRed renum :" />
            <Picker $width={62}>
              <Svg size={12}>{icons.autoSurf}</Svg>
              <select aria-label="Geometry colour mode"><option>Auto</option></select>
            </Picker>
            <PickerDrop type="button" aria-label="Choose geometry colour" />
            <Tools items="surfWire v surf v cubePale |" />
            <Picker $width={66}>
              <Svg size={12}>{icons.compCube}</Svg>
              <select aria-label="Element colour mode"><option>By Comp</option></select>
            </Picker>
            <PickerDrop type="button" aria-label="Choose element colour" />
            <Tools items="wireGrid v solidGrid v line v plate v plateBlue v tiles monitor : star" />
          </ToolBar>
          <ToolBar $height={24}>
            <Tools items="gCube gCyl v *gCone v gSphere v gTorus v gCubeRed gSweep gExtrude v gPipe v" />
          </ToolBar>
          <Panel onSubmit={e => e.preventDefault()}>
            <PanelColumn $width={168} $after={113}>
              <PanelButton type="button" $tone="pick" $focus>bottom center</PanelButton>
              <PanelButton type="button" $tone="pick">normal vector</PanelButton>
            </PanelColumn>
            <PanelColumn $width={265}>
              {fields.map(([label, value]) => (
                <Field key={label}><span>{label}</span><input type="text" defaultValue={value} /></Field>
              ))}
            </PanelColumn>
            <Spacer />
            <PanelColumn $width={80}>
              <PanelButton type="button" $tone="go">create</PanelButton>
              <PanelButton type="button" $tone="go">reject</PanelButton>
              <PanelButton type="button" $tone="back">return</PanelButton>
            </PanelColumn>
          </Panel>
        </Work>
      </Body>

      <StatusBar>
        <StatusText>Solids: Cone Full</StatusText>
        <StatusCell $width={93} />
        <StatusCell $width={94}>Model</StatusCell>
        <StatusCell $width={107}><Swatch />auto1</StatusCell>
        <StatusCell $width={102} />
      </StatusBar>

      <Caption>3. 創建圓柱體</Caption>
    </Window>
  );
}
